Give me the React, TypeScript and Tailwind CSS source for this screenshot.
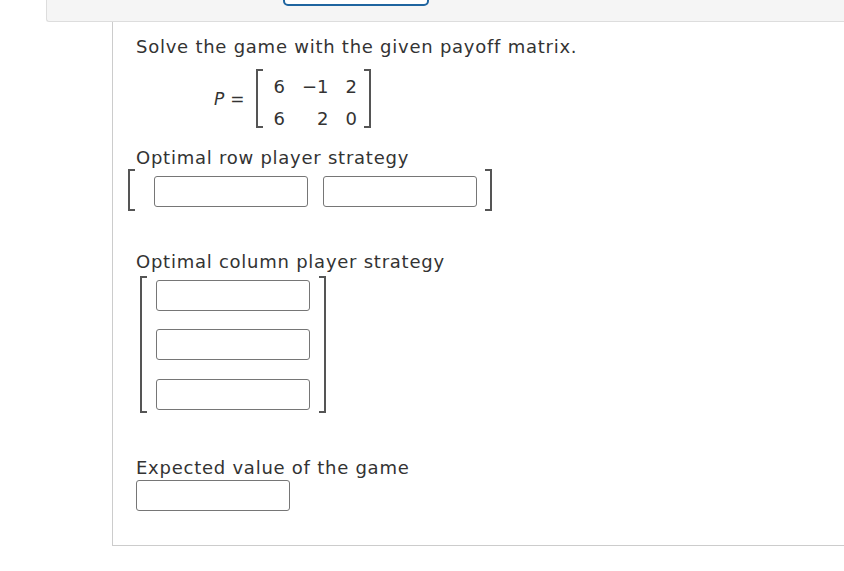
import React from "react";

function Box({ className = "" }: { className?: string }) {
  return (
    <div
      className={`h-[31px] w-[154px] shrink-0 rounded-[3px] border border-[#767676] bg-white ${className}`}
    />
  );
}

function Bracket({ side, className = "" }: { side: "l" | "r"; className?: string }) {
  return (
    <div
      className={`w-[7px] shrink-0 border-y-2 border-[#555] ${
        side === "l" ? "border-l-2" : "border-r-2"
      } ${className}`}
    />
  );
}

export default function App() {
  const rows = [
    ["6", "−1", "2"],
    ["6", "2", "0"],
  ];

  return (
    <div className="h-[571px] w-[844px] overflow-hidden bg-white font-['DejaVu_Sans',sans-serif] text-[#333]">
      {/* top toolbar strip */}
      <div className="ml-[46px] h-[22px] overflow-hidden rounded-bl-[3px] border-b border-l border-[#ddd] bg-[#f5f5f5]">
        <div className="ml-[236px] mt-[-24px] h-[30px] w-[146px] rounded-[5px] border-2 border-[#1f65a0] bg-white" />
      </div>

      <div className="ml-[112px] h-[524px] border-b border-l border-[#ccc] pl-[23px] text-[18px] leading-[24px] tracking-[0.75px]">
        <p className="pt-[13px]">Solve the game with the given payoff matrix.</p>

        {/* payoff matrix */}
        <div className="mt-[10px] flex items-center pl-[78px] tracking-normal">
          <span className="text-[17px] italic">P</span>
          <span className="ml-[6px] text-[17px]">=</span>
          <div className="ml-[11px] flex h-[59px]">
            <Bracket side="l" />
            <div className="grid grid-cols-[auto_auto_auto] gap-x-[17px] gap-y-[12px] pl-[11px] pr-[7px] pt-[8px] text-[18px] leading-[20px]">
              {rows.map((r, i) =>
                r.map((v, j) => (
                  <span key={`${i}-${j}`} className="text-right">
                    {v}
                  </span>
                ))
              )}
            </div>
            <Bracket side="r" />
          </div>
        </div>

        <p className="mt-[18px]">Optimal row player strategy</p>
        <div className="-mt-[1px] flex h-[42px]">
          <Bracket side="l" className="-ml-[8px]" />
          <Box className="ml-[19px] mt-[7px]" />
          <Box className="ml-[15px] mt-[7px]" />
          <Bracket side="r" className="ml-[8px]" />
        </div>

        <p className="mt-[39px]">Optimal column player strategy</p>
        <div className="mt-[2px] flex h-[137px]">
          <Bracket side="l" className="ml-[4px]" />
          <div className="ml-[9px] flex flex-col gap-[18px] pt-[4px]">
            <Box />
            <Box />
            <Box className="mt-[1px]" />
          </div>
          <Bracket side="r" className="ml-[9px]" />
        </div>

        <p className="mt-[43px]">Expected value of the game</p>
        <Box />
      </div>
    </div>
  );
}
